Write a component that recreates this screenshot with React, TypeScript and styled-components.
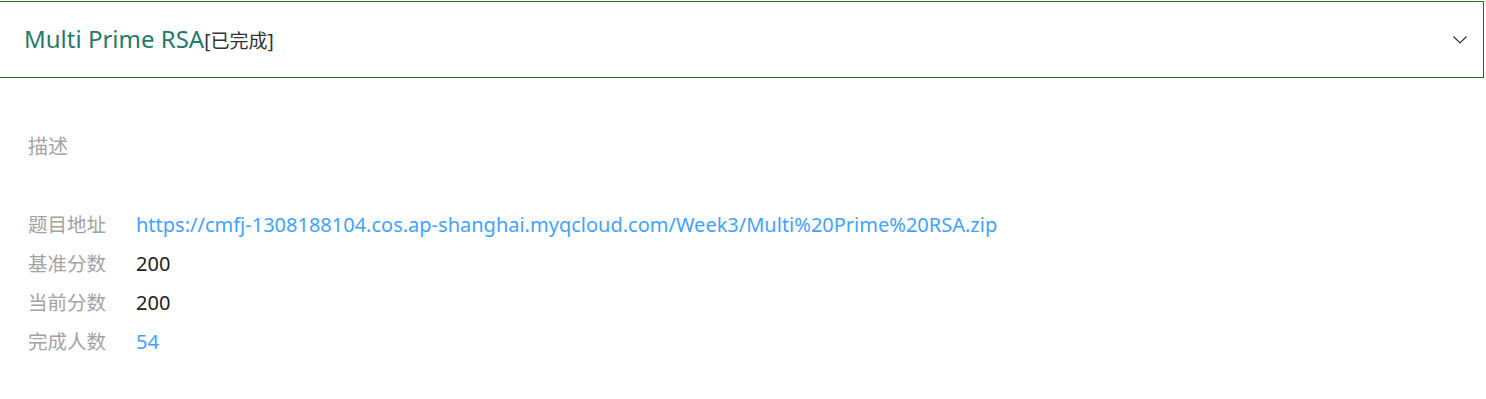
import React from "react";
import styled, { createGlobalStyle } from "styled-components";

const GlobalStyle = createGlobalStyle`
  body {
    margin: 0;
    background: #fff;
    font-family: "Noto Sans", "Noto Sans CJK SC", sans-serif;
  }
`;

const Page = styled.div`
  width: 1486px;
  padding-top: 1px;
`;

const Header = styled.div`
  width: 1484px;
  height: 77px;
  box-sizing: border-box;
  border: 1px solid #1d6e1d;
  border-left: none;
  display: flex;
  align-items: center;
  justify-content: space-between;
  padding: 0 15px 0 24px;
`;

const Title = styled.div`
  display: flex;
  align-items: baseline;
  margin-top: -2px;
`;

const Name = styled.span`
  font-size: 24px;
  color: #1f7b6a;
`;

const Status = styled.span`
  font-size: 19px;
  color: #333;
`;

const Body = styled.div`
  padding: 58px 28px 0;
`;

const Desc = styled.div`
  font-size: 20px;
  color: #a3a3a3;
  line-height: 22px;
  margin-bottom: 56px;
`;

const Rows = styled.div`
  display: grid;
  grid-template-columns: 108px 1fr;
  row-gap: 17px;
  font-size: 20px;
  line-height: 22px;
`;

const Label = styled.div`
  color: #a3a3a3;
  font-size: 19.5px;
`;

const Value = styled.div<{ $link?: boolean }>`
  color: ${(p) => (p.$link ? "#40a3ff" : "#222")};
`;

const Chevron = () => (
  <svg width="16" height="10" viewBox="0 0 16 10">
    <path d="M1.5 1.5 L8 8 L14.5 1.5" fill="none" stroke="#333" strokeWidth="1.2" />
  </svg>
);

const rows: { label: string; value: string; link?: boolean }[] = [
  {
    label: "题目地址",
    value: "https://cmfj-1308188104.cos.ap-shanghai.myqcloud.com/Week3/Multi%20Prime%20RSA.zip",
    link: true,
  },
  { label: "基准分数", value: "200" },
  { label: "当前分数", value: "200" },
  { label: "完成人数", value: "54", link: true },
];

export default function App() {
  return (
    <Page>
      <GlobalStyle />
      <Header>
        <Title>
          <Name>Multi Prime RSA</Name>
          <Status>[已完成]</Status>
        </Title>
        <Chevron />
      </Header>
      <Body>
        <Desc>描述</Desc>
        <Rows>
          {rows.map((r) => (
            <React.Fragment key={r.label}>
              <Label>{r.label}</Label>
              <Value $link={r.link}>{r.value}</Value>
            </React.Fragment>
          ))}
        </Rows>
      </Body>
    </Page>
  );
}
